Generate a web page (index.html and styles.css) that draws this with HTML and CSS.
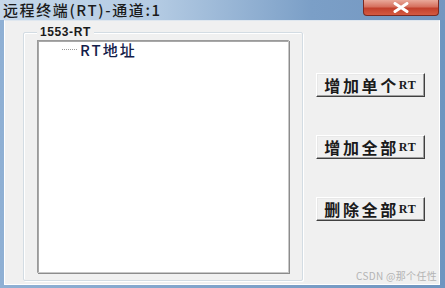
FILE: index.html
```html
<!DOCTYPE html>
<html>
<head>
<meta charset="utf-8">
<link rel="stylesheet" href="styles.css">
</head>
<body>
<div class="window">
  <div class="titlebar">
    <span class="title">远程终端(RT)-通道:1</span>
    <div class="close">
      <svg width="18" height="11" viewBox="0 0 18 11"><path d="M3 1.5 L15 9.5 M15 1.5 L3 9.5" stroke="#ffffff" stroke-width="3" stroke-linecap="round"/></svg>
    </div>
  </div>
  <div class="client">
    <div class="group">
      <span class="legend">1553-RT</span>
      <div class="tree">
        <div class="node"><span class="dots"></span><span class="node-text">RT地址</span></div>
      </div>
    </div>
    <div class="buttons">
      <button class="btn">增加单个<span class="rt">RT</span></button>
      <button class="btn">增加全部<span class="rt">RT</span></button>
      <button class="btn">删除全部<span class="rt">RT</span></button>
    </div>
    <div class="watermark">CSDN @那个任性</div>
  </div>
</div>
</body>
</html>
```
FILE: styles.css
```css
html, body {
  margin: 0;
  padding: 0;
}
body {
  width: 445px;
  height: 288px;
  overflow: hidden;
  font-family: "Noto Sans CJK SC", "Liberation Sans", sans-serif;
}
.window {
  width: 445px;
  height: 288px;
  display: flex;
  flex-direction: column;
  background: linear-gradient(to right, #8fb0d4 0%, #6f95c0 100%);
  box-sizing: border-box;
}
.titlebar {
  height: 20px;
  flex: none;
  display: flex;
  align-items: flex-start;
  position: relative;
  background: linear-gradient(to right, #c6d8ea 0%, #b4cbe3 35%, #7b9fc7 70%, #7396c0 100%);
}
.title {
  margin-left: 3px;
  margin-top: 1px;
  font-size: 15px;
  line-height: 17px;
  font-weight: 500;
  letter-spacing: 1.6px;
  color: #1b1b1b;
}
.close {
  position: absolute;
  left: 363px;
  top: 0;
  width: 76px;
  height: 16px;
  box-sizing: border-box;
  border: 1px solid #7a2a22;
  border-top: none;
  border-radius: 0 0 4px 4px;
  background: linear-gradient(to bottom, #e9a99a 0%, #d6705e 45%, #c2402c 55%, #d45a42 100%);
  display: flex;
  align-items: center;
  justify-content: center;
}
.client {
  flex: 1;
  margin: 0 5px 3px 4px;
  background: #f0f0f0;
  border: 1px solid #ffffff;
  border-top-color: #dfe7ef;
  display: flex;
  align-items: flex-start;
  position: relative;
}
.group {
  position: relative;
  margin-left: 18px;
  margin-top: 11px;
  width: 280px;
  height: 249px;
  box-sizing: border-box;
  border: 1px solid #d3dce3;
  border-radius: 2px;
  box-shadow: inset 1px 1px 0 #ffffff, 1px 1px 0 #ffffff;
  padding: 7px 13px 7px 13px;
}
.legend {
  position: absolute;
  left: 13px;
  top: -7px;
  padding: 0 3px;
  background: #f0f0f0;
  font-family: "Liberation Sans", sans-serif;
  font-weight: bold;
  font-size: 12px;
  line-height: 13px;
  letter-spacing: 0.6px;
  color: #1a1a1a;
}
.tree {
  height: 100%;
  box-sizing: border-box;
  background: #ffffff;
  border: 1px solid #9a9a9a;
  border-right-color: #c8c8c8;
  border-bottom-color: #c8c8c8;
  box-shadow: inset 1px 1px 0 #a8a8a8, 1px 1px 0 #8c8c8c;
}
.node {
  display: flex;
  align-items: center;
  height: 17px;
  padding-left: 24px;
}
.dots {
  width: 15px;
  height: 0;
  border-top: 1px dotted #9a9a9a;
  margin-right: 3px;
}
.node-text {
  font-size: 15px;
  line-height: 17px;
  font-weight: 500;
  letter-spacing: 2px;
  color: #14204a;
}
.buttons {
  display: flex;
  flex-direction: column;
  gap: 38px;
  margin-left: 13px;
  margin-top: 52px;
}
.btn {
  width: 109px;
  height: 24px;
  padding: 0;
  margin: 0;
  box-sizing: border-box;
  background: #f0f0f0;
  border: 1px solid;
  border-color: #ffffff #404040 #404040 #ffffff;
  box-shadow: inset -1px -1px 0 #a0a0a0, inset 1px 1px 0 #e8e8e8;
  font-family: "Noto Sans CJK SC", sans-serif;
  font-weight: bold;
  font-size: 16px;
  line-height: 20px;
  letter-spacing: 2.6px;
  color: #1a1a1a;
  display: flex;
  align-items: center;
  justify-content: center;
}
.rt {
  font-family: "Liberation Serif", serif;
  font-weight: bold;
  font-size: 12px;
  letter-spacing: 0.8px;
}
.watermark {
  position: absolute;
  right: 2px;
  bottom: 2px;
  font-size: 10px;
  line-height: 12px;
  color: #b4b4b4;
  letter-spacing: 0.3px;
}
```
